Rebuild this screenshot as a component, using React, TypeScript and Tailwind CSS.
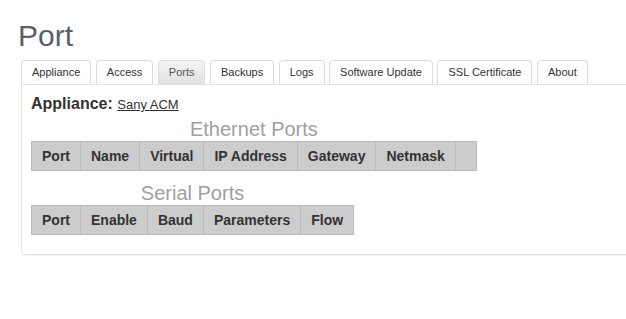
import React from "react";

const tabs = ["Appliance", "Access", "Ports", "Backups", "Logs", "Software Update", "SSL Certificate", "About"];
const ethernetCols = ["Port", "Name", "Virtual", "IP Address", "Gateway", "Netmask", ""];
const serialCols = ["Port", "Enable", "Baud", "Parameters", "Flow"];

function PortTable({ title, cols }: { title: string; cols: string[] }) {
  return (
    <table className="border-collapse">
      <caption className="text-[20px] leading-[23px] text-[#a0a0a0] text-center">{title}</caption>
      <thead>
        <tr>
          {cols.map((c, i) => (
            <th
              key={i}
              className="bg-[#cccccc] border border-[#bbbbbb] h-[29px] px-[10px] text-[14px] font-bold text-[#333] text-center whitespace-nowrap"
            >
              {c}
            </th>
          ))}
        </tr>
      </thead>
    </table>
  );
}

export default function App() {
  return (
    <div className="w-[626px] h-[319px] overflow-hidden bg-white font-['Liberation_Sans',Arial,sans-serif]">
      {/* page title */}
      <h1 className="pt-[21px] pl-[18px] text-[30px] leading-[30px] text-[#58606a]">Port</h1>

      {/* tabs */}
      <div className="mt-[9px] ml-[21px] flex gap-[4.5px]">
        {tabs.map((t) => (
          <div
            key={t}
            className={`h-[24px] px-[10px] flex items-center border border-b-0 border-[#dddddd] rounded-t-[4px] text-[11px] whitespace-nowrap ${
              t === "Ports" ? "bg-gradient-to-b from-[#f3f3f3] to-[#e2e2e2] text-[#555]" : "bg-white text-[#333]"
            }`}
          >
            {t}
          </div>
        ))}
      </div>

      {/* panel */}
      <div className="ml-[21px] w-[640px] border border-[#e2e2e2] rounded-bl-[4px] shadow-[0_1px_1px_rgba(0,0,0,0.04)] pt-[9px] pl-[9px] pb-[19px]">
        <div className="leading-[20px] text-[#333]">
          <span className="text-[16px] font-bold">Appliance:</span>{" "}
          <span className="text-[13px] underline">Sany ACM</span>
        </div>
        <div className="mt-[3px]">
          <PortTable title="Ethernet Ports" cols={ethernetCols} />
        </div>
        <div className="mt-[11px]">
          <PortTable title="Serial Ports" cols={serialCols} />
        </div>
      </div>
    </div>
  );
}
